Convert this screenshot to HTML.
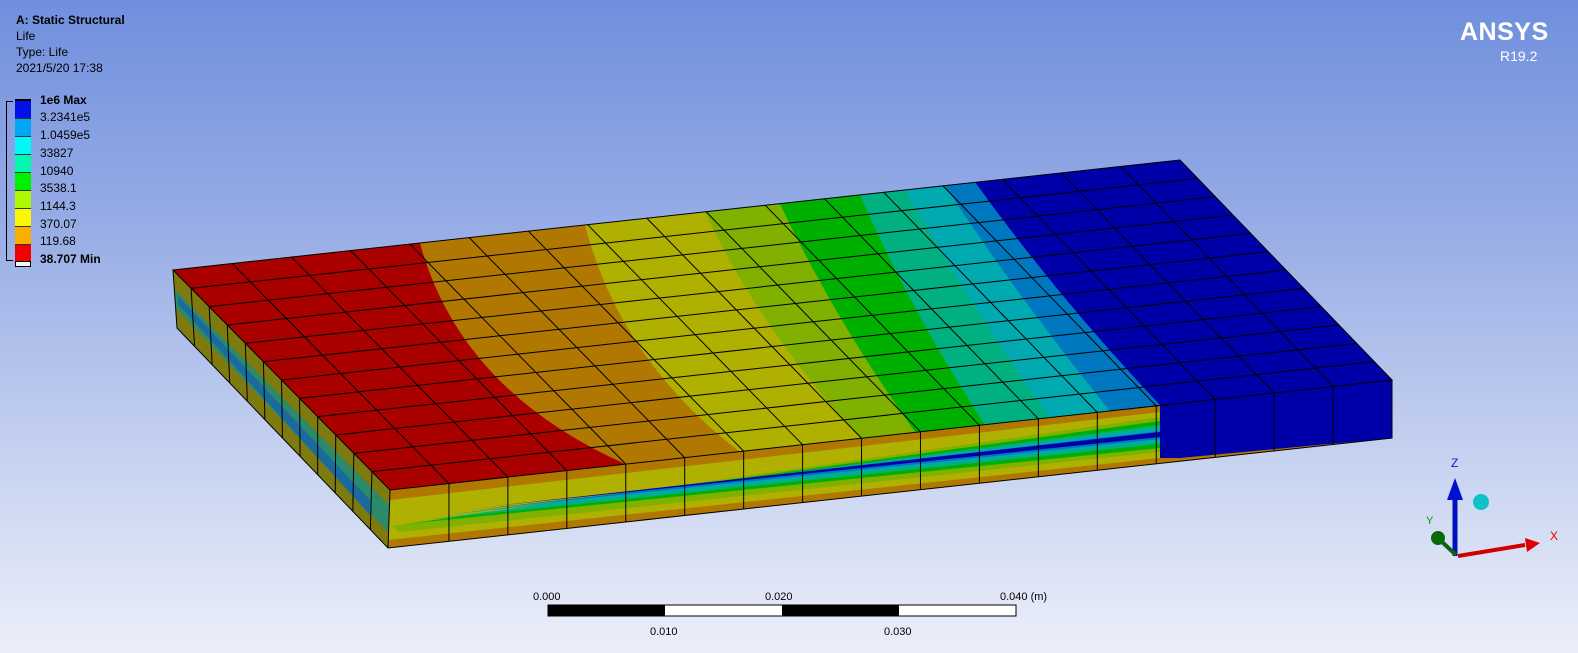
<!DOCTYPE html>
<html><head><meta charset="utf-8"><style>
html,body{margin:0;padding:0}
body{width:1578px;height:653px;overflow:hidden;position:relative;font-family:"Liberation Sans",sans-serif;
background:linear-gradient(180deg,#6f8fdd 0%,#98ade6 35%,#c6d2f0 70%,#eceff9 100%);}
.t{position:absolute;font-size:12px;color:#000;line-height:16px}
.b{font-weight:bold}
.lg{position:absolute;left:40px;font-size:12px;line-height:12px}
</style></head><body>
<div class="t b" style="left:16px;top:12px">A: Static Structural</div>
<div class="t" style="left:16px;top:28px">Life</div>
<div class="t" style="left:16px;top:44px">Type: Life</div>
<div class="t" style="left:16px;top:60px">2021/5/20 17:38</div>
<div style="position:absolute;left:6px;top:101px;width:6px;height:158px;border:1px solid #000;border-right:none"></div>
<div style="position:absolute;left:15px;top:99px;width:16px;height:166px;">
<div style="height:2px;background:#000"></div>
<div style="height:17px;background:#0010e8;border-bottom:1px solid #333"></div>
<div style="height:17px;background:#00a8f4;border-bottom:1px solid #333"></div>
<div style="height:17px;background:#00f8f8;border-bottom:1px solid #333"></div>
<div style="height:17px;background:#00f8b0;border-bottom:1px solid #333"></div>
<div style="height:17px;background:#00f000;border-bottom:1px solid #333"></div>
<div style="height:17px;background:#b0f800;border-bottom:1px solid #333"></div>
<div style="height:17px;background:#f8f800;border-bottom:1px solid #333"></div>
<div style="height:17px;background:#f8b000;border-bottom:1px solid #333"></div>
<div style="height:16px;background:#f00000;border-bottom:1px solid #000"></div>
<div style="height:4px;background:#f4f4f4;border:1px solid #000;border-top:none"></div>
</div>
<div class="lg b" style="top:94px">1e6 Max</div>
<div class="lg" style="top:111px">3.2341e5</div>
<div class="lg" style="top:129px">1.0459e5</div>
<div class="lg" style="top:147px">33827</div>
<div class="lg" style="top:165px">10940</div>
<div class="lg" style="top:182px">3538.1</div>
<div class="lg" style="top:200px">1144.3</div>
<div class="lg" style="top:218px">370.07</div>
<div class="lg" style="top:235px">119.68</div>
<div class="lg b" style="top:253px">38.707 Min</div>

<div style="position:absolute;left:1460px;top:18px;color:#fff;font-weight:bold;font-size:25px;letter-spacing:0.5px">ANSYS</div>
<div style="position:absolute;left:1500px;top:48px;color:#fff;font-size:14px">R19.2</div>

<svg id="s" width="1578" height="653" style="position:absolute;left:0;top:0">
<polygon points="173,270 1180,160 1392,380 390,490" fill="#0000a8"/>
<path d="M173,270 L975,182 Q1060,300 1160,405 L390,490 Z" fill="#0078c0"/>
<path d="M173,270 L945,186 Q1020,300 1110,411 L390,490 Z" fill="#00aab0"/>
<path d="M173,270 L905,190 Q970,305 1050,418 L390,490 Z" fill="#00b080"/>
<path d="M173,270 L860,195 Q910,310 985,425 L390,490 Z" fill="#00b000"/>
<path d="M173,270 L780,204 Q835,320 915,432 L390,490 Z" fill="#80b000"/>
<path d="M173,270 L705,212 Q760,330 860,438 L390,490 Z" fill="#b0b000"/>
<path d="M173,270 L585,225 Q620,360 740,452 L390,490 Z" fill="#b07800"/>
<path d="M173,270 L420,243 Q460,390 625,464 L390,490 Z" fill="#aa0000"/>
<!-- front face -->
<polygon points="390,490 1392,380 1392,438 388,548" fill="#b07800"/>
<polygon points="390,500 1160,412 1160,458 388,540" fill="#b0b000"/>
<polygon points="392,526 1160,417 1160,452 400,532" fill="#80b000"/>
<polygon points="405,524 1160,421 1160,448" fill="#00b000"/>
<polygon points="425,520 1160,425 1160,444" fill="#00b080"/>
<polygon points="445,515 1160,428 1160,441" fill="#00a8b0"/>
<polygon points="465,511 1160,431 1160,439" fill="#0078c0"/>
<polygon points="485,507 1160,432 1160,437" fill="#0000a8"/>
<polygon points="1160,405 1392,380 1392,438 1180,458 1160,458" fill="#0000a8"/>
<!-- left face -->
<polygon points="173,270 390,490 388,548 177,328" fill="#7e7a10"/>
<polygon points="175,290 389,505 388,532 176,308" fill="#2a8a6a"/>
<polygon points="178,296 370,500 370,515 178,304" fill="#1a6aa0"/>
<g id="grid" stroke="#000" stroke-width="1" fill="none"></g>
<polygon points="173,270 1180,160 1392,380 390,490" fill="none" stroke="#000"/>
<polyline points="173,270 177,328 388,548 1392,438 1392,380" fill="none" stroke="#000"/>
<line x1="390" y1="490" x2="388" y2="548" stroke="#000"/>
<rect x="548" y="605" width="468" height="11" fill="#fff" stroke="#000"/>
<rect x="548" y="605" width="117" height="11" fill="#000"/>
<rect x="782" y="605" width="117" height="11" fill="#000"/>
<g font-family="Liberation Sans,sans-serif" font-size="11" fill="#000">
<text x="533" y="600">0.000</text><text x="765" y="600">0.020</text><text x="1000" y="600">0.040 (m)</text>
<text x="650" y="635">0.010</text><text x="884" y="635">0.030</text>
</g>
<line x1="1455" y1="556" x2="1455" y2="495" stroke="#0010c0" stroke-width="5"/>
<polygon points="1455,478 1447,500 1463,500" fill="#0010d0"/>
<text x="1451" y="467" font-size="12" fill="#0020e0" font-family="Liberation Sans,sans-serif">Z</text>
<circle cx="1481" cy="502" r="8" fill="#10c0c8"/>
<line x1="1456" y1="555" x2="1440" y2="540" stroke="#106010" stroke-width="4"/>
<circle cx="1438" cy="538" r="7" fill="#0a6a0a"/>
<text x="1426" y="524" font-size="11" fill="#00a000" font-family="Liberation Sans,sans-serif">Y</text>
<line x1="1458" y1="556" x2="1525" y2="545" stroke="#d00000" stroke-width="4"/>
<polygon points="1540,543 1525,538 1527,552" fill="#e00000"/>
<text x="1550" y="540" font-size="12" fill="#f00000" font-family="Liberation Sans,sans-serif">X</text>
</svg>
<script>
var g=document.getElementById('grid'),h='';
var A=[173,270],B=[1180,160],C=[1392,380],D=[390,490];
function P(u,v){var x=A[0]*(1-u)*(1-v)+B[0]*u*(1-v)+C[0]*u*v+D[0]*(1-u)*v;var y=A[1]*(1-u)*(1-v)+B[1]*u*(1-v)+C[1]*u*v+D[1]*(1-u)*v;return [x,y];}
var NU=17,NV=12;
for(var i=1;i<NU;i++){var p=P(i/NU,0),q=P(i/NU,1);h+='<line x1="'+p[0]+'" y1="'+p[1]+'" x2="'+q[0]+'" y2="'+q[1]+'"/>';
h+='<line x1="'+q[0]+'" y1="'+q[1]+'" x2="'+q[0]+'" y2="'+(q[1]+58)+'"/>';}
for(var j=1;j<NV;j++){var p=P(0,j/NV),q=P(1,j/NV);h+='<line x1="'+p[0]+'" y1="'+p[1]+'" x2="'+q[0]+'" y2="'+q[1]+'"/>';
h+='<line x1="'+p[0]+'" y1="'+p[1]+'" x2="'+(p[0]+ (j/NV)*(-2)+4*(1-j/NV))+'" y2="'+(p[1]+58)+'"/>';}
g.innerHTML=h;
</script>
</body></html>
